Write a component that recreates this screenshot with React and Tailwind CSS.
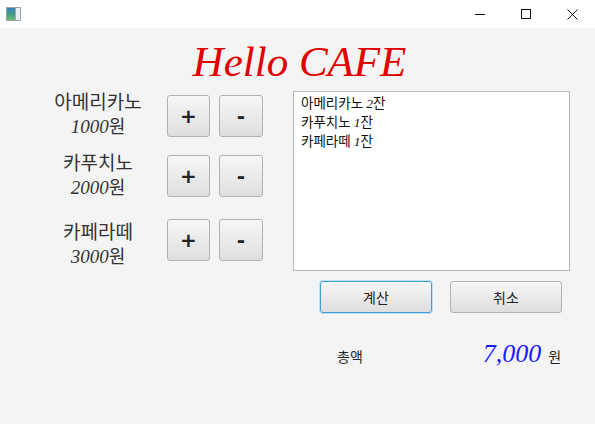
import React from "react";

const kr = { fontFamily: '"Noto Sans CJK KR", "Noto Sans", sans-serif' };
const serif = { fontFamily: '"Liberation Serif", "DejaVu Serif", serif' };

function Num({ children, className = "" }) {
  return (
    <span className={`italic ${className}`} style={serif}>
      {children}
    </span>
  );
}

function FxButton({ children, focused = false, className = "" }) {
  return (
    <button
      className={`flex items-center justify-center rounded-[3px] border bg-gradient-to-b from-[#f7f7f7] to-[#dedede] ${
        focused ? "border-[#3a9fd8] shadow-[0_0_0_1px_#bfe0f3]" : "border-[#b3b3b3]"
      } ${className}`}
    >
      {children}
    </button>
  );
}

const menu = [
  { name: "아메리카노", price: "1000", rowClass: "mt-[4px]", labelClass: "-mt-[6px]" },
  { name: "카푸치노", price: "2000", rowClass: "mt-[18px]", labelClass: "-mt-[5px]" },
  { name: "카페라떼", price: "3000", rowClass: "mt-[22px]", labelClass: "mt-0" },
];

const orders = [
  { name: "아메리카노", qty: "2" },
  { name: "카푸치노", qty: "1" },
  { name: "카페라떼", qty: "1" },
];

export default function App() {
  return (
    <div className="w-[595px] h-[424px] overflow-hidden bg-[#f4f4f4] text-[#333]" style={kr}>
      {/* title bar */}
      <div className="h-[28px] bg-white flex items-center justify-between">
        <div className="ml-[6px] w-[15px] h-[14px] border border-[#9aa4ad] bg-[#e9eef1] flex">
          <div className="w-[8px] h-full bg-gradient-to-b from-[#3d7fb8] via-[#3f9d86] to-[#6cb86b]" />
          <div className="w-[1px] h-full bg-[#9aa4ad]" />
        </div>
        <div className="flex items-center h-full">
          <div className="w-[46px] h-full flex items-center justify-center">
            <div className="w-[10px] h-[1px] bg-[#111]" />
          </div>
          <div className="w-[46px] h-full flex items-center justify-center">
            <div className="w-[10px] h-[10px] border border-[#111]" />
          </div>
          <div className="w-[46px] h-full flex items-center justify-center">
            <svg width="11" height="11" viewBox="0 0 11 11">
              <path d="M0.5 0.5 L10.5 10.5 M10.5 0.5 L0.5 10.5" stroke="#111" strokeWidth="1" />
            </svg>
          </div>
        </div>
      </div>

      {/* heading */}
      <div className="h-[63px] flex justify-center">
        <h1 className="mt-[12px] ml-[4px] text-[43px] leading-none italic text-[#e00000]" style={serif}>
          Hello CAFE
        </h1>
      </div>

      <div className="flex">
        {/* menu */}
        <div className="pl-[40px] flex flex-col">
          {menu.map((m) => (
            <div key={m.name} className={`flex items-start h-[42px] ${m.rowClass}`}>
              <div className={`w-[116px] flex flex-col items-center ${m.labelClass}`}>
                <div className="h-[24px] text-[19px] leading-[24px]">{m.name}</div>
                <div className="h-[24px] text-[18px] leading-[24px]">
                  <Num className="text-[19px]">{m.price}</Num>원
                </div>
              </div>
              <FxButton className="ml-[11px] w-[43px] h-[42px] text-[20px] font-bold text-[#222]">
                <span style={{ fontFamily: '"DejaVu Sans", sans-serif' }}>+</span>
              </FxButton>
              <FxButton className="ml-[9px] w-[44px] h-[42px] text-[20px] font-bold text-[#222]">
                <span style={{ fontFamily: '"DejaVu Sans", sans-serif' }}>-</span>
              </FxButton>
            </div>
          ))}
        </div>

        {/* order list + actions */}
        <div className="ml-[30px] flex flex-col">
          <div className="w-[277px] h-[180px] bg-white border border-[#b8b8b8] pt-[1px] pl-[7px]">
            {orders.map((o) => (
              <div key={o.name} className="h-[19px] text-[13.5px] leading-[19px] text-[#111]">
                {o.name} <Num className="text-[13.5px]">{o.qty}</Num>잔
              </div>
            ))}
          </div>
          <div className="flex mt-[10px] ml-[27px] gap-[18px]">
            <FxButton focused className="w-[112px] h-[32px] text-[14px] text-[#222]">
              계산
            </FxButton>
            <FxButton className="w-[112px] h-[32px] text-[14px] text-[#222]">취소</FxButton>
          </div>
          <div className="flex items-baseline h-[40px] mt-[21px] ml-[44px]">
            <span className="text-[14px] text-[#222]">총액</span>
            <Num className="ml-[120px] text-[26px] text-[#1a1aff]">7,000</Num>
            <span className="ml-[7px] text-[14px] text-[#222]">원</span>
          </div>
        </div>
      </div>
    </div>
  );
}
